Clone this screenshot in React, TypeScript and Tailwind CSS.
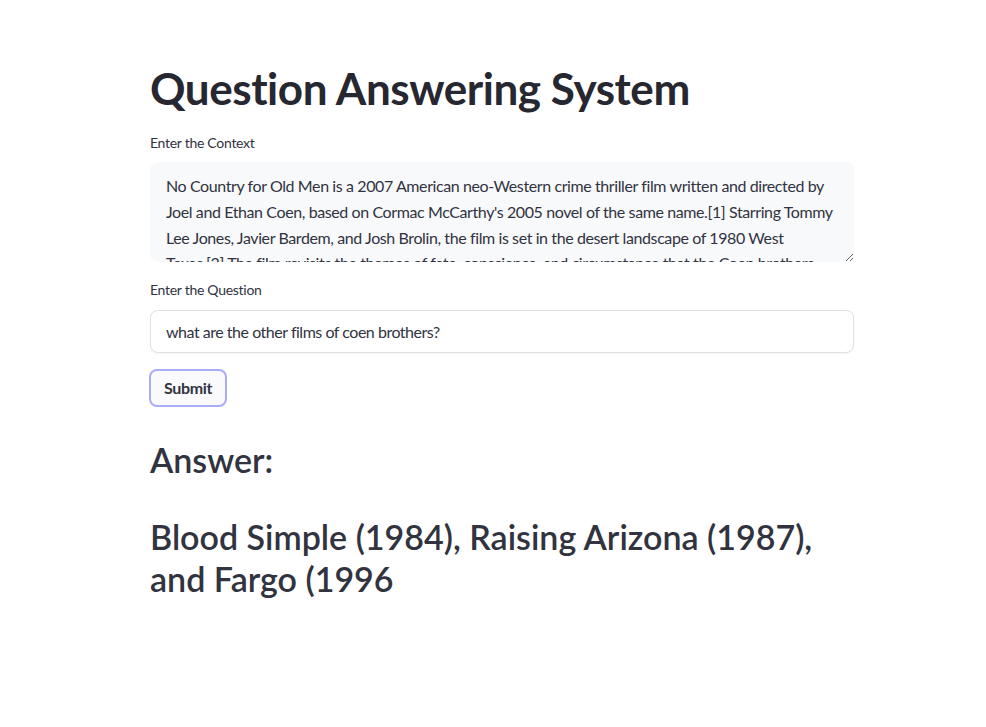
import { useState } from 'react';

// \u2060 mantiene "Texas.[2]" unido, como en el original
const CONTEXT =
  "No Country for Old Men is a 2007 American neo-Western crime thriller film written and directed by Joel and Ethan Coen, based on Cormac McCarthy's 2005 novel of the same name.[1] Starring Tommy Lee Jones, Javier Bardem, and Josh Brolin, the film is set in the desert landscape of 1980 West Texas.\u2060[2] The film revisits the themes of fate, conscience, and circumstance that the Coen brothers had previously explored in the films Blood Simple (1984), Raising Arizona (1987), and Fargo (1996).";

export default function App() {
  const [context, setContext] = useState(CONTEXT);
  const [question, setQuestion] = useState('what are the other films of coen brothers?');

  return (
    <div className="min-h-screen bg-white font-['Lato',sans-serif] text-[#31333f]">
      <main className="ml-[150px] w-[704px] pt-[56px]">
        {/* Título */}
        <h1 className="text-[44px] font-bold leading-[1.2] tracking-[-0.01em] py-[6px] text-[#262730]">
          Question Answering System
        </h1>

        <label className="block mt-[12px] mb-[10px] text-[14px] leading-[1.4] tracking-[-0.02em]">
          Enter the Context
        </label>
        <textarea
          value={context}
          onChange={(e) => setContext(e.target.value)}
          className="block w-full h-[100px] resize-y overflow-hidden rounded-[8px] bg-[#f8f9fb] pl-[16px] pr-[16px] pt-[11px] text-[16px] leading-[1.6] tracking-[-0.025em] outline-none"
        />

        <label className="block mt-[18px] mb-[10px] text-[14px] leading-[1.4] tracking-[-0.02em]">
          Enter the Question
        </label>
        <input
          value={question}
          onChange={(e) => setQuestion(e.target.value)}
          className="block w-full h-[43px] rounded-[8px] border border-[#dfe0e6] bg-white px-[15px] text-[16px] tracking-[-0.03em] shadow-[0_1px_2px_rgba(0,0,0,0.04)] outline-none"
        />

        <button className="mt-[16px] -ml-px h-[38px] rounded-[8px] border-2 border-[#a9acf8] bg-[#fafafd] px-[13px] text-[16px] font-bold tracking-[-0.02em]">
          Submit
        </button>

        {/* Respuesta */}
        <h2 className="mt-[32px] text-[34px] font-semibold leading-[42px]">Answer:</h2>
        <h2 className="mt-[35px] text-[34px] font-semibold leading-[42px]">
          Blood Simple (1984), Raising Arizona (1987), and Fargo (1996
        </h2>
      </main>
    </div>
  );
}
